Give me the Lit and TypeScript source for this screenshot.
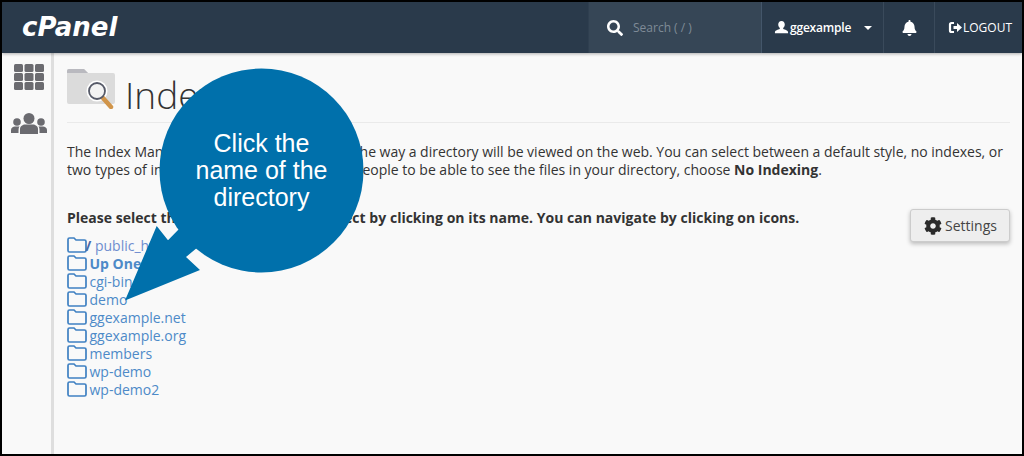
import { LitElement, html, css, svg } from "lit";
import { customElement } from "lit/decorators.js";

const folder = html`<svg class="folder" viewBox="0 0 20 16"><path d="M1 13.500V2.500A1.500 1.500 0 0 1 2.500 1H7L9 3H17.500A1.500 1.500 0 0 1 19 4.500V13.500A1.500 1.500 0 0 1 17.500 15H2.500A1.500 1.500 0 0 1 1 13.500Z" fill="none" stroke="#3f80c2" stroke-width="1.700"/></svg>`;

const rows = ["Up One Level", "cgi-bin", "demo", "ggexample.net", "ggexample.org", "members", "wp-demo", "wp-demo2"];

@customElement("app-root")
export class AppRoot extends LitElement {
  static styles = css`
    :host { display: block; width: 1024px; height: 456px; box-sizing: border-box; border: 2px solid #000; overflow: hidden; position: relative; background: #f9f9f9; font-family: "Open Sans", sans-serif; color: #333; }
    .nav { height: 51px; background: #2a3a4b; display: flex; align-items: stretch; color: #fff; box-shadow: 0 1px 3px rgba(0,0,0,.3); position: relative; }
    .logo { font-family: "DejaVu Sans", sans-serif; font-weight: 700; font-style: italic; font-size: 26px; line-height: 51px; padding-left: 20px; flex: 1; }
    .search { width: 173px; box-sizing: border-box; background: #364656; display: flex; align-items: center; padding-left: 18px; gap: 10px; font-size: 12px; color: #7f8b97; border-left: 1px solid #2f3f50; }
    .search svg { width: 16px; height: 16px; fill: #fff; }
    .user { width: 122px; box-sizing: border-box; border-left: 1px solid #44566a; display: flex; align-items: center; padding-left: 12px; font-size: 12px; font-weight: 600; letter-spacing: -.2px; }
    .user svg { width: 15px; height: 15px; fill: #fff; margin-right: 1px; }
    .caret { width: 0; height: 0; border: 4px solid transparent; border-top-color: #fff; border-bottom: 0; margin-left: 13px; }
    .bell { width: 51px; box-sizing: border-box; border-left: 1px solid #3a4a5b; display: flex; align-items: center; justify-content: center; }
    .bell svg { width: 15px; height: 16px; fill: #fff; }
    .logout { flex: none; width: 88px; box-sizing: border-box; border-left: 1px solid #3a4a5b; display: flex; align-items: center; padding-left: 13px; font-size: 12px; font-weight: 500; gap: 1px; }
    .logout svg { width: 14px; height: 13px; }
    .body { display: flex; height: 401px; }
    .side { width: 44px; flex: none; padding-left: 5px; border-right: 3px solid #dedede; display: flex; flex-direction: column; align-items: center; padding-top: 11px; gap: 23px; }
    .side svg { display: block; fill: #6b6b70; }
    .main { flex: 1; padding: 15px 12px 0 13px; min-width: 0; }
    .title { display: flex; align-items: flex-start; gap: 10px; height: 52px; border-bottom: 1px solid #eaeaea; padding-bottom: 2px; }
    .title svg { flex: none; margin-top: 1px; }
    .title h1 { margin: 4px 0 0; font-weight: 300; font-size: 37px; line-height: 46px; color: #333; }
    .intro { margin: 20px 0 0; font-size: 14px; line-height: 18px; white-space: nowrap; }
    .tight { word-spacing: -.1px; }
    .pick { margin: 30px 0 0; font-size: 14px; line-height: 18px; font-weight: 700; white-space: nowrap; word-spacing: .1px; }
    .settings { float: right; margin: -18px 0 0 0; width: 100px; height: 33px; box-sizing: border-box; background: #eeeeee; border: 1px solid #ccc; border-radius: 3px; box-shadow: 0 2px 4px rgba(0,0,0,.25); display: flex; align-items: center; padding-left: 13px; gap: 3px; font-size: 14px; color: #444; }
    .settings svg { width: 18px; height: 18px; fill: #2b2b2b; flex: none; }
    ul { list-style: none; margin: 9px 0 0; padding: 0; }
    li { height: 18px; display: flex; align-items: center; font-size: 14px; color: #4d8ac8; gap: 2.500px; }
    .folder { width: 20px; height: 16px; flex: none; }
    li.up { font-weight: 700; }
    .slash { color: #6f8dcf; margin-left: -4px; white-space: pre; }
    .slash b { color: #4a6aa8; }
    .callout { position: absolute; left: -2px; top: -2px; width: 1024px; height: 456px; pointer-events: none; }
    .callout svg { position: absolute; inset: 0; width: 100%; height: 100%; }
    .bubble { position: absolute; left: 159.500px; top: 68.500px; width: 204px; height: 204px; display: flex; align-items: center; justify-content: center; text-align: center; font-family: "Liberation Sans", Arial, sans-serif; font-size: 25px; line-height: 27px; color: #fff; }
  `;

  render() {
    return html`
      <div class="nav">
        <div class="logo">cPanel</div>
        <div class="search">
          <svg viewBox="0 0 512 512"><path d="M505 442.700L405.300 343c-4.500-4.500-10.600-7-17-7H372c27.600-35.300 44-79.700 44-128C416 93.100 322.900 0 208 0S0 93.100 0 208s93.100 208 208 208c48.300 0 92.700-16.400 128-44v16.300c0 6.400 2.500 12.500 7 17l99.700 99.700c9.400 9.400 24.600 9.400 33.900 0l28.300-28.300c9.400-9.400 9.400-24.600.1-34zM208 336c-70.700 0-128-57.200-128-128 0-70.700 57.200-128 128-128 70.700 0 128 57.200 128 128 0 70.700-57.200 128-128 128z"/></svg>
          <span>Search ( / )</span>
        </div>
        <div class="user">
          <svg viewBox="0 0 16 16"><path d="M8 1c2.200 0 3.500 1.700 3.500 3.800 0 1.600-.7 3-1.700 3.700v1.200c1.800.6 5.200 1.500 5.200 3.300v1H1v-1c0-1.800 3.400-2.700 5.200-3.300V8.500C5.200 7.800 4.500 6.400 4.500 4.800 4.500 2.700 5.800 1 8 1z"/></svg>
          <span>ggexample</span><i class="caret"></i>
        </div>
        <div class="bell">
          <svg viewBox="0 0 448 512"><path d="M224 512c35.320 0 63.970-28.650 63.970-64H160.030c0 35.350 28.650 64 63.970 64zm215.390-149.710c-19.320-20.760-55.470-51.990-55.470-154.290 0-77.700-54.480-139.900-127.940-155.160V32c0-17.670-14.320-32-31.980-32s-31.980 14.330-31.980 32v20.840C118.560 68.100 64.080 130.300 64.080 208c0 102.300-36.150 133.530-55.470 154.290-6 6.450-8.660 14.160-8.610 21.710.11 16.400 12.980 32 32.100 32h383.800c19.120 0 32-15.600 32.100-32 .05-7.550-2.610-15.270-8.610-21.710z"/></svg>
        </div>
        <div class="logout">
          <svg viewBox="0 0 14 13"><path d="M6 2H3.500A1.500 1.500 0 0 0 2 3.500v6A1.500 1.500 0 0 0 3.500 11H6" fill="none" stroke="#fff" stroke-width="2.200"/><path d="M5.500 5h3.500V2l5 4.500-5 4.500V8H5.500z" fill="#fff"/></svg>
          <span>LOGOUT</span>
        </div>
      </div>
      <div class="body">
        <div class="side">
          <svg width="30" height="26" viewBox="0 0 30 26">
            ${[0, 1, 2].map((r) => [0, 1, 2].map((c) => svg`<rect x="${c * 10.5}" y="${r * 9}" width="9" height="8" rx="1.500"/>`))}
          </svg>
          <svg width="36" height="22" viewBox="0 0 36 22">
            <circle cx="18" cy="5.500" r="5.500"/><circle cx="6" cy="9" r="3.800"/><circle cx="30" cy="9" r="3.800"/>
            <path d="M9 21v-5c0-3 3-4.500 5-4.500h8c2 0 5 1.500 5 4.500v5z"/>
            <path d="M0 20v-3c0-2 2-3.500 4-3.500h4.500C7.500 14.500 7.500 16 7.500 20zM36 20v-3c0-2-2-3.500-4-3.500h-4.500c1 1 1 2.500 1 6.500z"/>
          </svg>
        </div>
        <div class="main">
          <div class="title">
            <svg width="48" height="40" viewBox="0 0 48 40">
              <path d="M0 2a2 2 0 0 1 2-2h15l4 4h25a2 2 0 0 1 2 2v27a2 2 0 0 1-2 2H2a2 2 0 0 1-2-2z" fill="#dbdbdb"/>
              <path d="M0 4V2a2 2 0 0 1 2-2h15l4 4z" fill="#b9b9bf"/>
              <circle cx="30" cy="22" r="10.500" fill="#fff"/>
              <path d="M36 29l8 9" stroke="#d1954a" stroke-width="4.500" stroke-linecap="round"/>
              <circle cx="30" cy="22" r="8" fill="#f3f3f3" stroke="#565a68" stroke-width="1.800"/>
            </svg>
            <h1>Index</h1>
          </div>
          <p class="intro"><span class="tight">The Index Manager allows you to customize the way a directory will be viewed on the web. You can select between a default style, no indexes, or</span><br>two types of indexing. If you do not want all people to be able to see the files in your directory, choose <b>No Indexing</b>.</p>
          <p class="pick">Please select the folders you wish to select by clicking on its name. You can navigate by clicking on icons.</p>
          <div class="settings">
            <svg viewBox="0 0 512 512"><path d="M487.400 315.700l-42.600-24.600c4.300-23.200 4.300-47 0-70.200l42.600-24.600c4.900-2.800 7.100-8.600 5.500-14-11.100-35.600-30-67.800-54.700-94.600-3.800-4.100-10-5.100-14.800-2.300L380.800 110c-17.900-15.400-38.500-27.300-60.800-35.100V25.800c0-5.600-3.900-10.500-9.400-11.700-36.700-8.200-74.300-7.800-109.200 0-5.500 1.200-9.400 6.100-9.400 11.700V75c-22.200 7.900-42.800 19.800-60.800 35.100L88.700 85.500c-4.900-2.800-11-1.900-14.800 2.300-24.700 26.700-43.600 58.900-54.700 94.600-1.700 5.400.6 11.200 5.500 14L67.300 221c-4.300 23.200-4.300 47 0 70.200l-42.600 24.600c-4.900 2.800-7.100 8.600-5.500 14 11.100 35.600 30 67.800 54.700 94.600 3.800 4.100 10 5.100 14.800 2.300l42.600-24.600c17.900 15.400 38.500 27.300 60.800 35.100v49.200c0 5.600 3.900 10.500 9.400 11.700 36.700 8.200 74.300 7.800 109.200 0 5.500-1.200 9.400-6.100 9.400-11.700v-49.200c22.200-7.900 42.800-19.800 60.800-35.100l42.600 24.600c4.900 2.800 11 1.900 14.800-2.300 24.700-26.700 43.600-58.900 54.700-94.600 1.500-5.500-.7-11.300-5.600-14.100zM256 336c-44.100 0-80-35.900-80-80s35.900-80 80-80 80 35.900 80 80-35.900 80-80 80z"/></svg>
            <span>Settings</span>
          </div>
          <ul>
            <li>${folder}<span class="slash"><b>/</b> public_html</span></li>
            ${rows.map((r) => html`<li class="${r === "Up One Level" ? "up" : ""}">${folder}<span>${r}</span></li>`)}
          </ul>
        </div>
      </div>
      <div class="callout">
        <svg viewBox="0 0 1024 456">
          <circle cx="261.500" cy="170.500" r="102" fill="#0070ab"/>
          <polygon points="125,300.500 156.700,226 168,240.300 180,228 198,247 186,257 200,270" fill="#0070ab"/>
        </svg>
        <div class="bubble"><span>Click the<br>name of the<br>directory</span></div>
      </div>
    `;
  }
}
